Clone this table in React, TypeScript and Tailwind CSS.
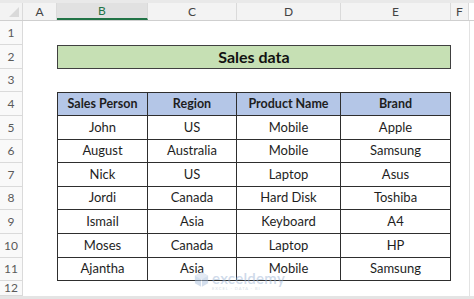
import React from "react";

const cols = [
  { key: "A", w: "w-[34px]" },
  { key: "B", w: "w-[91px]" },
  { key: "C", w: "w-[89px]" },
  { key: "D", w: "w-[104px]" },
  { key: "E", w: "w-[110px]" },
  { key: "F", w: "w-[18px]" },
];

const rowHeights = [
  "h-[24px]",
  "h-[24px]",
  "h-[23px]",
  "h-[24px]",
  "h-[24px]",
  "h-[23px]",
  "h-[24px]",
  "h-[23px]",
  "h-[24px]",
  "h-[24px]",
  "h-[23px]",
  "h-[15px]",
];

const headers = ["Sales Person", "Region", "Product Name", "Brand"];
const rows = [
  ["John", "US", "Mobile", "Apple"],
  ["August", "Australia", "Mobile", "Samsung"],
  ["Nick", "US", "Laptop", "Asus"],
  ["Jordi", "Canada", "Hard Disk", "Toshiba"],
  ["Ismail", "Asia", "Keyboard", "A4"],
  ["Moses", "Canada", "Laptop", "HP"],
  ["Ajantha", "Asia", "Mobile", "Samsung"],
];

const tableW = ["w-[91px]", "w-[89px]", "w-[104px]", "w-[110px]"];

function RowHeader({ n, h }: { n: number; h: string }) {
  return (
    <div
      className={`${h} w-[23px] shrink-0 border-r border-b border-[#dadada] bg-[#f9f9f9] flex items-center justify-center text-[12px] text-[#5a5a5a]`}
    >
      {n}
    </div>
  );
}

function TableRow({ cells, header }: { cells: string[]; header?: boolean }) {
  return (
    <div className="flex h-full">
      {cells.map((c, i) => (
        <div
          key={i}
          className={`${tableW[i]} h-full flex items-center justify-center border-r border-b border-[#2e2e2e] ${
            i === 0 ? "border-l" : ""
          } ${header ? "border-t bg-[#b4c6e7] font-bold text-[12.5px]" : "bg-white text-[13px]"} text-[#1e1e1e]`}
        >
          {c}
        </div>
      ))}
    </div>
  );
}

export default function App() {
  return (
    <div
      className="relative w-[474px] h-[299px] overflow-hidden bg-white flex flex-col"
      style={{ fontFamily: "Lato, 'Noto Sans', sans-serif" }}
    >
      {/* top strip */}
      <div className="h-[3px] bg-[#e9e9e9] shrink-0" />

      {/* column headers */}
      <div className="flex h-[18px] shrink-0 border-b border-[#cfcfcf] bg-[#f3f3f3]">
        <div className="w-[23px] shrink-0 border-r border-[#dadada] relative">
          <svg className="absolute right-[3px] bottom-[3px]" width="10" height="10" viewBox="0 0 10 10">
            <path d="M10 0 L10 10 L0 10 Z" fill="#d9d9d9" />
          </svg>
        </div>
        {cols.map((c) => (
          <div
            key={c.key}
            className={`${c.w} shrink-0 flex items-center justify-center text-[12px] border-r border-[#dadada] ${
              c.key === "B"
                ? "bg-[#e1e1e1] text-[#217346] border-b-2 border-b-[#217346]"
                : "text-[#444]"
            }`}
          >
            {c.key}
          </div>
        ))}
        <div className="flex-1 bg-white" />
      </div>

      {/* body rows */}
      {rowHeights.map((h, r) => {
        const n = r + 1;
        return (
          <div key={n} className={`flex ${h} shrink-0`}>
            <RowHeader n={n} h={h} />
            <div className="w-[34px] shrink-0" />
            <div className="w-[394px] shrink-0 h-full">
              {n === 2 && (
                <div className="h-full border-[1.5px] border-[#404040] bg-[#c6e0b4] flex items-center justify-center text-[16px] font-bold text-[#111]">
                  Sales data
                </div>
              )}
              {n === 4 && <TableRow cells={headers} header />}
              {n >= 5 && n <= 11 && <TableRow cells={rows[n - 5]} />}
            </div>
            <div className="w-[18px] shrink-0" />
            <div className="flex-1 border-l border-[#e3e3e3]" />
          </div>
        );
      })}

      {/* bottom band */}
      <div className="h-[3px] bg-[#e4e4e4] shrink-0" />

      {/* watermark */}
      <div className="absolute left-[193px] top-[271px] flex items-start gap-[2px] opacity-50 pointer-events-none">
        <svg width="17" height="17" viewBox="0 0 18 18">
          <path d="M9 1 L16 5 L16 13 L9 17 L2 13 L2 5 Z" fill="#a9bfdc" />
          <path d="M9 1 L16 5 L9 9 L2 5 Z" fill="#c9d7ea" />
          <path d="M9 9 L9 17" stroke="#ffffff" strokeWidth="1" />
        </svg>
        <div className="flex flex-col leading-none">
          <span className="text-[15px] font-semibold text-[#9fb6d6] tracking-[0.3px]">exceldemy</span>
          <span className="text-[4px] text-[#b0bfd3] tracking-[1px] mt-[1px]">EXCEL · DATA · BI</span>
        </div>
      </div>
    </div>
  );
}
